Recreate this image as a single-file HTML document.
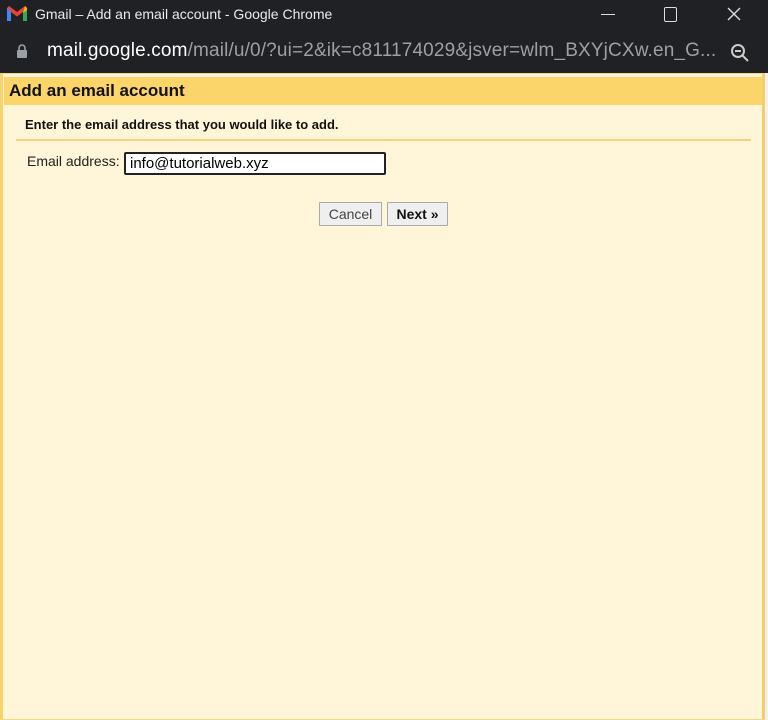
<!DOCTYPE html>
<html><head><meta charset="utf-8"><style>
*{margin:0;padding:0;box-sizing:border-box}
body{width:768px;height:720px;background:#f1f1f1;font-family:"Liberation Sans",Arial,sans-serif;position:relative;overflow:hidden}
.top{position:absolute;left:0;top:0;width:768px;height:73px;background:#202124}
.title{position:absolute;left:35px;top:6px;color:#e8eaed;font-size:14px}
.url{position:absolute;left:47px;top:40px;font-size:19px;color:#9aa0a6;white-space:nowrap;letter-spacing:0.15px}
.url b{font-weight:normal;color:#fff}
.win{position:absolute;left:0;top:73px;width:765px;height:647px;background:#fff5d8;border:1px solid #f5d77e;border-left:3px solid #f7d46a;border-right:3px solid #f3cf6b}
.hdr{position:absolute;left:4px;top:77px;width:758px;height:28px;background:#fbd569}
.hdr span{position:absolute;left:5px;top:4px;font-size:17px;font-weight:bold;color:#111}
.sub{position:absolute;left:25px;top:117px;font-size:13px;font-weight:bold;color:#111}
.line{position:absolute;left:16px;top:139px;width:735px;height:2px;background:#f8d574}
.lbl{position:absolute;left:27px;top:153px;font-size:14px;color:#222}
.inp{position:absolute;left:124px;top:152px;width:262px;height:23px;background:#fff;border:2px solid #222;border-radius:2px;font-size:15px;padding:1px 0 0 4px;color:#000}
.btn{position:absolute;top:202px;height:24px;border:1px solid #aaa;background:#efefef;font-size:14px;text-align:center;line-height:22px;border-radius:1px}
</style></head><body>
<div class="top">
<svg style="position:absolute;left:7px;top:6px" width="20" height="15" viewBox="0 0 20 15"><path d="M0 2v13h4V6l6 4.5 6-4.5v9h4V2l-2-2-8 6-8-6z" fill="#ea4335"/><path d="M0 2v13h4V5z" fill="#4285f4"/><path d="M16 5v10h4V2z" fill="#34a853"/><path d="M18 0l2 2v2l-4 3z" fill="#fbbc04"/></svg>
<div class="title">Gmail – Add an email account - Google Chrome</div>
<div style="position:absolute;left:601px;top:14px;width:14px;height:1px;background:#ddd"></div>
<div style="position:absolute;left:664px;top:7px;width:13px;height:15px;border:1.5px solid #ddd;border-radius:2px"></div>
<svg style="position:absolute;left:727px;top:7px" width="14" height="14"><path d="M1 1L13 13M13 1L1 13" stroke="#ddd" stroke-width="1.4"/></svg>
<svg style="position:absolute;left:16px;top:44px" width="12" height="15"><rect x="1" y="6" width="10" height="8" rx="1" fill="#9aa0a6"/><path d="M3 6V4a3 3 0 0 1 6 0v2" stroke="#9aa0a6" stroke-width="1.6" fill="none"/></svg>
<div class="url"><b>mail.google.com</b>/mail/u/0/?ui=2&amp;ik=c811174029&amp;jsver=wlm_BXYjCXw.en_G...</div>
<svg style="position:absolute;left:730px;top:43px" width="20" height="20"><circle cx="8" cy="8" r="6" stroke="#ccc" stroke-width="2" fill="none"/><path d="M5 8h6M12.5 12.5L18 18" stroke="#ccc" stroke-width="2"/></svg>
</div>
<div class="win"></div>
<div class="hdr"><span>Add an email account</span></div>
<div class="sub">Enter the email address that you would like to add.</div>
<div class="line"></div>
<div class="lbl">Email address:</div>
<div class="inp">info@tutorialweb.xyz</div>
<div class="btn" style="left:319px;width:63px;color:#444">Cancel</div>
<div class="btn" style="left:387px;width:61px;font-weight:bold;color:#111">Next »</div>
</body></html>
